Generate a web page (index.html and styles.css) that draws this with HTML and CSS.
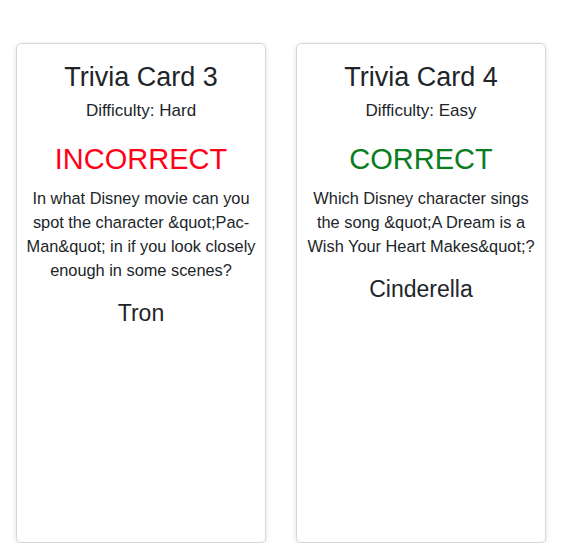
FILE: index.html
```html
<!DOCTYPE html>
<html lang="en">
<head>
  <meta charset="UTF-8">
  <meta name="viewport" content="width=device-width, initial-scale=1.0">
  <title>Trivia Cards</title>
  <link rel="stylesheet" href="styles.css">
</head>
<body>

  <div class="card-row">
    <div class="card">
      <h3 class="card-title">Trivia Card 3</h3>
      <p class="difficulty">Difficulty: Hard</p>
      <h2 class="verdict incorrect">INCORRECT</h2>
      <p class="question">In what Disney movie can you spot the character &amp;quot;Pac-Man&amp;quot; in if you look closely enough in some scenes?</p>
      <h4 class="answer">Tron</h4>
    </div>

    <div class="card">
      <h3 class="card-title">Trivia Card 4</h3>
      <p class="difficulty">Difficulty: Easy</p>
      <h2 class="verdict correct">CORRECT</h2>
      <p class="question">Which Disney character sings the song &amp;quot;A Dream is a Wish Your Heart Makes&amp;quot;?</p>
      <h4 class="answer">Cinderella</h4>
    </div>
  </div>

</body>
</html>
```

FILE: styles.css
```css
body {
  margin: 0;
  font-family: "Liberation Sans", Arial, sans-serif;
  color: #212529;
  background-color: #fff;
}
.card-row {
  display: flex;
  gap: 30px;
  padding: 43px 0 0 16px;
}
.card {
  width: 250px;
  height: 500px;
  box-sizing: border-box;
  padding: 17px 8px;
  border: 1px solid #d6d6d6;
  border-radius: 5px;
  box-shadow: 0 2px 5px rgba(0,0,0,0.12);
  text-align: center;
}
.card-title {
  font-size: 27px;
  font-weight: normal;
  line-height: 1.2;
  margin: 0 0 6px;
}
.difficulty {
  font-size: 17px;
  line-height: 24px;
  margin: 0 0 19px;
}
.verdict {
  font-size: 29px;
  font-weight: normal;
  line-height: 1.2;
  margin: 0 0 9px;
}
.incorrect {
  color: #ff0018;
}
.correct {
  color: #0a7d1e;
}
.question {
  font-size: 16.35px;
  line-height: 24px;
  margin: 0 0 18px;
}
.answer {
  font-size: 23px;
  font-weight: normal;
  line-height: 1.2;
  margin: 0;
}
```
